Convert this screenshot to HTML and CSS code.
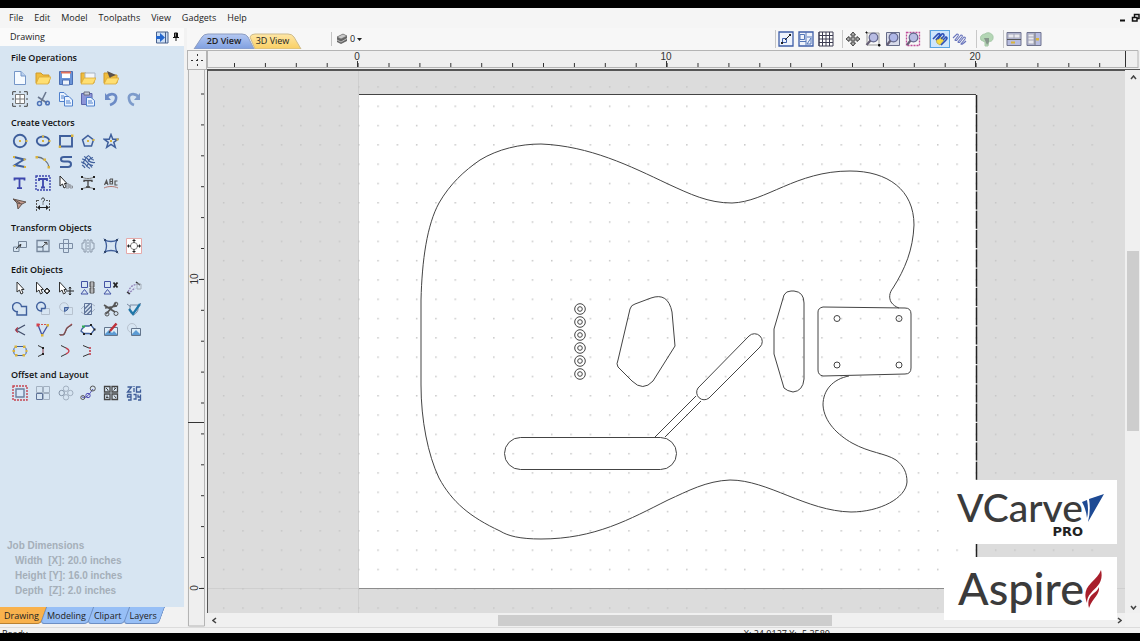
FILE: index.html
```html
<!DOCTYPE html>
<html lang="en">
<head>
  <meta charset="UTF-8">
  <title>VCarve Pro</title>
  <link rel="stylesheet" href="styles.css">
</head>
<body>
  <!-- menu bar -->
  <header class="menubar">
    <nav class="menu">
      <button>File</button>
      <button>Edit</button>
      <button>Model</button>
      <button>Toolpaths</button>
      <button>View</button>
      <button>Gadgets</button>
      <button>Help</button>
    </nav>
    <div class="window-buttons">
      <button aria-label="Minimize"><svg width="8" height="10" viewBox="0 0 8 10"><path d="M1 7.500H6" stroke="#111" stroke-width="2"/></svg></button>
      <button aria-label="Restore"><svg width="9" height="10" viewBox="0 0 9 10"><path d="M3.500 4V1.500H8V5.500H6M1.500 4.500H6V8H1.500Z" fill="none" stroke="#111" stroke-width="1.500"/></svg></button>
    </div>
  </header>

  <main class="main">
    <!-- left panel -->
    <aside class="sidebar">
      <div class="panel-header">
        <span>Drawing</span>
        <button aria-label="Switch panel"><svg width="13" height="13" viewBox="0 0 13 13"><path d="M.5 1H12V12H.5Z" fill="#cfe0f5" stroke="#47608c"/><path d="M9.500 1V12" stroke="#47608c"/><path d="M0 5H4V2L9 6.500L4 11V8H0Z" fill="#2467cf"/></svg></button>
        <button aria-label="Pin panel"><svg width="8" height="10" viewBox="0 0 8 10"><path d="M2.500 1H5.500V5H2.500ZM1 5.500H7M4 6V9" fill="none" stroke="#111"/><path d="M4.500 1V5" stroke="#111" stroke-width="2"/></svg></button>
      </div>

      <div class="panel">
        <section class="tools">
          <h2>File Operations</h2>
          <div class="tool-grid">
            <button aria-label="New"><svg class="icon" viewBox="0 0 16 16"><path d="M2.500 1.500H9L13.500 6V14.500H2.500Z" fill="#f5faff" stroke="#7496c8"/><path d="M9 1.500V6H13.500" fill="#b9d0ee" stroke="#7496c8"/></svg></button>
            <button aria-label="Open"><svg class="icon" viewBox="0 0 16 16"><path d="M1 13V3H6L8 5H14V13Z" fill="#f0bd3d" stroke="#cf9a2a"/><path d="M1 14L4 7H16L13 14Z" fill="#ffdf72" stroke="#d9a93a" stroke-width=".8"/></svg></button>
            <button aria-label="Save"><svg class="icon" viewBox="0 0 16 16"><path d="M1.500 1.500H14.500V14.500H1.500Z" fill="#6b94d8" stroke="#4a6fb4"/><path d="M4 2H12V8H4Z" fill="#fff" stroke="none"/><path d="M3 2.500H13" stroke="#e2725b" stroke-width="2"/><path d="M4.500 10H11.500V15H4.500Z" fill="#eef3fa" stroke="#4a6fb4"/></svg></button>
            <button aria-label="Import vectors"><svg class="icon" viewBox="0 0 16 16"><path d="M1 13V3H6L8 5H14V13Z" fill="#f0bd3d" stroke="#cf9a2a"/><path d="M5 3H15V9H5Z" fill="#f3f6fa" stroke="#a8b4c2"/><path d="M1 14L4 8H16L13 14Z" fill="#ffdf72" stroke="#d9a93a" stroke-width=".8"/></svg></button>
            <button aria-label="Import bitmap"><svg class="icon" viewBox="0 0 16 16"><path d="M1 13V3H6L8 5H14V13Z" fill="#f0bd3d" stroke="#cf9a2a"/><path d="M4 1L13 5L8 7L7 9Z" fill="#5c524b" stroke="none"/><path d="M1 14L4 8H16L13 14Z" fill="#ffdf72" stroke="#d9a93a" stroke-width=".8"/></svg></button>
          </div>
          <div class="tool-grid">
            <button aria-label="Job setup"><svg class="icon" viewBox="0 0 16 16"><path d="M3.500 3.500H12.500V12.500H3.500ZM8 3.500V12.500M3.500 8H12.500" fill="#fff" stroke="#777"/><path d="M.7 4V.7H4M12 .7H15.300V4M15.300 12V15.300H12M4 15.300H.7V12M0 8H2M14 8H16M8 0V2M8 14V16" stroke="#444"/></svg></button>
            <button aria-label="Cut"><svg class="icon" viewBox="0 0 16 16"><path d="M11 1L6 11M3 6L12 12" stroke="#6a7890" stroke-width="1.600"/><circle cx="4.500" cy="12.500" r="2" stroke="#4e73b8" stroke-width="1.500"/><circle cx="12.500" cy="12" r="1.800" stroke="#4e73b8" stroke-width="1.500"/></svg></button>
            <button aria-label="Copy"><svg class="icon" viewBox="0 0 16 16"><path d="M1.500 1.500H6L9 4.500V10.500H1.500Z" fill="#eaf3ff" stroke="#4f80cc"/><path d="M6.500 5.500H11L14.500 9V15H6.500Z" fill="#eaf3ff" stroke="#4f80cc"/><path d="M3 5H6M3 7H6M8 10H12M8 12H13" stroke="#4f80cc"/></svg></button>
            <button aria-label="Paste"><svg class="icon" viewBox="0 0 16 16"><path d="M1.500 2.500H12V13.500H1.500Z" fill="#8d95d8" stroke="#5b64aa"/><path d="M4 1H9.500V4H4Z" fill="#c8ccd8" stroke="#6b6f80"/><path d="M6.500 6.500H11L14.500 9.500V15H6.500Z" fill="#eaf3ff" stroke="#4f80cc"/><path d="M8 10H12M8 12H13" stroke="#4f80cc"/></svg></button>
            <button aria-label="Undo"><svg class="icon" viewBox="0 0 16 16"><path d="M3 6C8 1 14 3 13 8C12.500 11 10 13 7 14" stroke="#6c8bc6" stroke-width="2.600"/><path d="M2 2V9H8Z" fill="#6c8bc6" stroke="none"/></svg></button>
            <button aria-label="Redo"><svg class="icon" viewBox="0 0 16 16"><path d="M13 6C8 1 2 3 3 8C3.500 11 5 13 8 14" stroke="#7d9bcb" stroke-width="2.600"/><path d="M14 2V9H8Z" fill="#7d9bcb" stroke="none"/></svg></button>
          </div>
        </section>

        <section class="tools">
          <h2>Create Vectors</h2>
          <div class="tool-grid">
            <button aria-label="Circle"><svg class="icon" viewBox="0 0 16 16"><circle cx="8" cy="8" r="6.200" stroke-width="1.900"/><path d="M7 7H9V9H7ZM13.500 7H15.500V9H13.500Z" class="node"/></svg></button>
            <button aria-label="Ellipse"><svg class="icon" viewBox="0 0 16 16"><ellipse cx="8" cy="8" rx="6.200" ry="4.500" stroke-width="1.900"/><path d="M7 7H9V9H7ZM13.500 7H15.500V9H13.500ZM7 2.500H9V4.500H7Z" class="node"/></svg></button>
            <button aria-label="Rectangle"><svg class="icon" viewBox="0 0 16 16"><path d="M2 3H14V13.500H2Z" stroke-width="1.900"/><path d="M13 1.500H15.500V4H13ZM.7 12.500H3V15H.7Z" class="node"/></svg></button>
            <button aria-label="Polygon"><svg class="icon" viewBox="0 0 16 16"><path d="M8 2.500L13.500 6.800L11.500 13H4.500L2.500 6.800Z" stroke-width="1.500"/><path d="M7 7H9V9H7ZM12.500 6H14.500V8H12.500Z" class="node"/></svg></button>
            <button aria-label="Star"><svg class="icon" viewBox="0 0 16 16"><path d="M8 1.500L9.800 6.200H14.800L10.800 9.300L12.300 14.300L8 11.300L3.700 14.300L5.200 9.300L1.200 6.200H6.200Z" stroke-width="1.500"/><path d="M7 7H9V9H7ZM13.500 5.500H15.500V7.500H13.500Z" class="node"/></svg></button>
          </div>
          <div class="tool-grid">
            <button aria-label="Polyline"><svg class="icon" viewBox="0 0 16 16"><path d="M2 3L12 5.500L3 11L13 13" stroke-width="2"/><path d="M1 2H3V4H1ZM11.500 4.500H13.500V6.500H11.500ZM1.500 11H3.500V13H1.500ZM12 12H14V14H12Z" class="node"/></svg></button>
            <button aria-label="Arc"><svg class="icon" viewBox="0 0 16 16"><path d="M2 3C8 3 13 8 14 13" stroke="#68727c" stroke-width="1.300"/><path d="M.5 2H3V4.500H.5ZM8.500 4.500H11V7H8.500ZM12.500 12H15V14.500H12.500Z" class="node"/></svg></button>
            <button aria-label="Curve"><svg class="icon" viewBox="0 0 16 16"><path d="M14 3H6C2 3 2 7.500 6 7.500H10C14 7.500 14 13 10 13H2" stroke-width="2"/></svg></button>
            <button aria-label="Texture"><svg class="icon" viewBox="0 0 16 16"><path d="M2 5Q5 5 7 8Q9 11 13 11.500M4 2.500Q8 4 9 7Q11 9 15 8.500M8 1.500Q10 2 11 4.500Q12 6 14 6M1 8Q4 8 6 11Q7 13 10 14.500M2 11Q4 12 5 14M5 6Q6 3 8 2M8 7.500Q10 4 13 3.500M3 10Q4 6 5 6M7 13Q7 10 9 10Q11 12 12 13.500" stroke-width="1.200"/></svg></button>
          </div>
          <div class="tool-grid">
            <button aria-label="Text"><svg class="icon" viewBox="0 0 16 16"><path d="M2.500 5.500V3.500H12.500V5.500M7.500 3.500V13M5 13.200H10" stroke="#3c46ad" stroke-width="1.800"/></svg></button>
            <button aria-label="Auto layout text"><svg class="icon" viewBox="0 0 16 16"><path d="M1 1H15V15H1Z" stroke="#3c46ad" stroke-width="1.400" stroke-dasharray="2 1"/><path d="M4 6V4H12V6M8 4V12.500M6 12.500H10" stroke="#3c46ad" stroke-width="1.800"/></svg></button>
            <button aria-label="Edit text"><svg class="icon" viewBox="0 0 16 16"><path d="M2 1V11L4.500 9L6 13L8 12L6.500 8.500H9Z" fill="#fff" stroke="#222"/><path d="M8 9H11V13H8ZM12 9V13H14.500V11H12M8 11H11" stroke="#8c9097"/></svg></button>
            <button aria-label="Transform text"><svg class="icon" viewBox="0 0 16 16"><path d="M2 2C5 4 11 4 14 2M2 14C5 12 11 12 14 14" stroke="#777"/><path d="M4 7V5.500H12V7M8 5.500V12M6 12H10" stroke="#444" stroke-width="1.300"/><path d="M1 1H3V3H1ZM13 1H15V3H13ZM1 13H3V15H1ZM13 13H15V15H13Z" fill="#222" stroke="none"/></svg></button>
            <button aria-label="Text on curve"><svg class="icon" viewBox="0 0 16 16"><path d="M1.500 10L3.500 5.500L5 10M2.500 8.500H4.500M7 4V9H9.500V4H7M7 6.500H9.500M14.500 6H12V10H14.500" stroke="#555" stroke-width="1.200"/><path d="M1 13C5 11 11 11 15 13" stroke="#b5776f"/></svg></button>
          </div>
          <div class="tool-grid">
            <button aria-label="Trace bitmap"><svg class="icon" viewBox="0 0 16 16"><path d="M1 3L14 6L10 8L6 13L5 7Z" fill="#c59a8e" stroke="#63554f"/><path d="M5 7L10 8M1 3L8 7" stroke="#63554f"/></svg></button>
            <button aria-label="Dimension"><svg class="icon" viewBox="0 0 16 16"><path d="M1.500 4V15M14.500 4V15M2 4.500H5M11 4.500H14" stroke="#555" stroke-dasharray="2 1"/><path d="M3 11.500H13" stroke="#222"/><path d="M2 11.500L5 9V14ZM14 11.500L11 9V14Z" fill="#222" stroke="none"/><path d="M6.500 3.500C6.500 1.500 9.500 1.500 9.500 3.500C9.500 5 8 5 8 6.500M8 7.500V8.500" stroke="#222"/></svg></button>
          </div>
        </section>

        <section class="tools">
          <h2>Transform Objects</h2>
          <div class="tool-grid">
            <button aria-label="Move"><svg class="icon" viewBox="0 0 16 16"><path d="M6.500 3.500H14.500V9.500H6.500ZM1.500 9H7V13.500H1.500Z" stroke="#75869a"/><path d="M4 11L9 6.500M9 6.500L6.500 7.500M9 6.500L8 9" stroke="#333"/></svg></button>
            <button aria-label="Set size"><svg class="icon" viewBox="0 0 16 16"><path d="M2 2.500H14V13.500H2ZM2 9H8V13.500" stroke="#75869a" stroke-width="1.300"/><path d="M7 9L12 4.500M12 4.500H9M12 4.500V7" stroke="#444"/></svg></button>
            <button aria-label="Rotate"><svg class="icon" viewBox="0 0 16 16"><path d="M5.500 1.500H10.500V14.500H5.500ZM1.500 5.500H14.500V10.500H1.500Z" stroke="#7b8ca4"/></svg></button>
            <button aria-label="Mirror"><svg class="icon" viewBox="0 0 16 16"><path d="M6 2H4V5H2V11H4V14H6ZM10 2H12V5H14V11H12V14H10Z" stroke="#8c99aa"/><path d="M8 1V15" stroke="#8c99aa" stroke-dasharray="2 1"/></svg></button>
            <button aria-label="Distort"><svg class="icon" viewBox="0 0 16 16"><path d="M2 2C5 4 11 4 14 2C12 6 12 10 14 14C11 12 5 12 2 14C4 10 4 6 2 2Z" stroke-width="1.300"/><path d="M1 1H3V3H1ZM13 1H15V3H13ZM1 13H3V15H1ZM13 13H15V15H13Z" fill="#34496e" stroke="none"/></svg></button>
            <button aria-label="Align"><svg class="icon" viewBox="0 0 16 16"><path d="M.5 .5H15.500V15.500H.5Z" fill="#fff" stroke="#e5a9a9"/><circle cx="8" cy="8" r="3.500" stroke="#888"/><path d="M8 1L6 3H10ZM8 15L6 13H10ZM1 8L3 6V10ZM15 8L13 6V10Z" fill="#222" stroke="none"/><path d="M8 2V5M8 11V14M2 8H5M11 8H14" stroke="#222"/></svg></button>
          </div>
        </section>

        <section class="tools">
          <h2>Edit Objects</h2>
          <div class="tool-grid">
            <button aria-label="Select"><svg class="icon" viewBox="0 0 16 16"><path d="M5 2V12L7.500 10L9 14L11 13L9.500 9.500H12Z" fill="#fff" stroke="#333"/></svg></button>
            <button aria-label="Node edit"><svg class="icon" viewBox="0 0 16 16"><path d="M1.500 2V12L4 10L5.500 14L7.500 13L6 9.500H8.500Z" fill="#fff" stroke="#333"/><path d="M12 8L15 11L12 14L9 11Z" fill="#555" stroke="#222"/><circle cx="12" cy="11" r="1.300" fill="#fff" stroke="none"/></svg></button>
            <button aria-label="Interactive move"><svg class="icon" viewBox="0 0 16 16"><path d="M1.500 2V12L4 10L5.500 14L7.500 13L6 9.500H8.500Z" fill="#fff" stroke="#333"/><path d="M12 7V15M8 11H16M11 8.500L12 7L13 8.500M11 13.500L12 15L13 13.500" stroke="#222"/></svg></button>
            <button aria-label="Group"><svg class="icon" viewBox="0 0 16 16"><path d="M1.500 1.500H7.500V7.500H1.500ZM1 14L4.500 9.500L8 14Z" stroke="#4353a4"/><path d="M10 2H14V7H10ZM10 8H14V13H10Z" fill="#8b8d92" stroke="#555"/><path d="M12 2V13" stroke="#ddd"/></svg></button>
            <button aria-label="Ungroup"><svg class="icon" viewBox="0 0 16 16"><path d="M1.500 1.500H7.500V7.500H1.500ZM1 14L4.500 9.500L8 14Z" stroke="#4353a4"/><path d="M10.500 2.500L14.500 7.500M14.500 2.500L10.500 7.500" stroke="#222" stroke-width="1.800"/></svg></button>
            <button aria-label="Measure"><svg class="icon" viewBox="0 0 16 16"><path d="M2 12C5 5 8 5 12 4M2 14L9 8" stroke="#9181b8" stroke-width="1.300" stroke-dasharray="2 1"/><path d="M1 12L4 14M10 2L14 5" stroke="#333" stroke-width="1.500"/><path d="M11 4H15V9H11Z" stroke="#a7b0ba"/></svg></button>
          </div>
          <div class="tool-grid">
            <button aria-label="Weld"><svg class="icon" viewBox="0 0 16 16"><path d="M6 10.500A4.500 4.500 0 1 1 9.500 5.500H14.500V14H5V10.500" stroke-width="1.400"/></svg></button>
            <button aria-label="Subtract"><svg class="icon" viewBox="0 0 16 16"><path d="M10 7.500H14.500V13.500H6.500V10" stroke="#b3bfcd"/><path d="M6.500 10A4.400 4.400 0 1 1 10 7.500H6.500Z" stroke-width="1.400"/></svg></button>
            <button aria-label="Intersect"><svg class="icon" viewBox="0 0 16 16"><circle cx="6" cy="6" r="4.300" stroke="#b7c2cf"/><path d="M6.500 6.500H14.500V13.500H6.500Z" stroke="#b7c2cf"/><path d="M6.500 6.500H10.500Q10 9.500 6.500 10.500Z" fill="#8ea6cc"/></svg></button>
            <button aria-label="Hatch"><svg class="icon" viewBox="0 0 16 16"><path d="M4.500 2.500H11.500V13.500H4.500Z" stroke="#5f7398"/><path d="M4.500 8L10 2.500M4.500 12L11.500 5M7 13.500L11.500 9" stroke="#5f7398" stroke-width="1.400"/><path d="M1 8L4 5M12 11L15 8M1 11L4 13M12 3L15 5" stroke="#aab6c8"/></svg></button>
            <button aria-label="Trim"><svg class="icon" viewBox="0 0 16 16"><path d="M1 4L12 11M3 13L13 2M2 7L14 5" stroke="#555" stroke-width="1.700"/><circle cx="13" cy="12.500" r="2" stroke="#555"/><circle cx="4" cy="13" r="2" stroke="#555"/><circle cx="13" cy="3" r="1.800" stroke="#555"/></svg></button>
            <button aria-label="Validate"><svg class="icon" viewBox="0 0 16 16"><path d="M4 4H12V9C11 12 8 14 7 14C5 13 4 11 4 9ZM1 3L5 6M15 2L11 6" stroke="#7b8ca4"/><path d="M3 8L7 13L14 3" stroke="#1e76a8" stroke-width="2.200"/></svg></button>
          </div>
          <div class="tool-grid">
            <button aria-label="Fillet"><svg class="icon" viewBox="0 0 16 16"><path d="M13 3L4 8L13 13" stroke="#44506c" stroke-width="1.300"/><path d="M6 5.500Q2 8 6 10.500" stroke="#b03546" stroke-width="1.300"/></svg></button>
            <button aria-label="Extend"><svg class="icon" viewBox="0 0 16 16"><path d="M3 3L7 13L13 3" stroke="#4353a4" stroke-width="1.300"/><path d="M3 2.500H11" stroke="#d4534f" stroke-dasharray="2 1"/><path d="M1.500 1.500H4.500V4.500H1.500Z" fill="#d4404b" stroke="none"/><path d="M6 12H8.500V14.500H6ZM11.500 2H14V4.500H11.500Z" class="node"/></svg></button>
            <button aria-label="Fit curves"><svg class="icon" viewBox="0 0 16 16"><path d="M2 13C8 14 7 8 9 6S12 4 14 2" stroke="#a4484e" stroke-width="1.500"/><path d="M1 12.500L6 13L9 6L14 3" stroke="#555" stroke-width=".8"/></svg></button>
            <button aria-label="Join"><svg class="icon" viewBox="0 0 16 16"><path d="M2 7L5 4H9L11 3L14.500 7.500L11 12L9 11.500H4L1 9Z" fill="#f2f7fc" stroke-width="1.300"/><path d="M2 4.500H5" stroke="#2fae52" stroke-width="2"/><path d="M10 2H12V4H10ZM13.500 6.500H15.500V8.500H13.500ZM10 11H12V13H10ZM3 11H5V13H3Z" fill="#222" stroke="none"/></svg></button>
            <button aria-label="Edit picture"><svg class="icon" viewBox="0 0 16 16"><path d="M1.500 5.500H14.500V13.500H1.500Z" fill="#dcecf7" stroke="#63758c"/><path d="M2 12L6 8L9 11L11 9L14 12V13H2Z" fill="#5c9bd4" stroke="none"/><path d="M13.500 1.500L7 9" stroke="#bd313a" stroke-width="2.500"/><path d="M7 9L6 11" stroke="#333"/></svg></button>
            <button aria-label="Crop picture"><svg class="icon" viewBox="0 0 16 16"><circle cx="6" cy="6" r="4.500" stroke="#b7c2cf"/><path d="M5.500 6.500H14.500V13.500H5.500Z" fill="#dcecf7" stroke="#63758c"/><path d="M6 12L10 8L14 12V13H6Z" fill="#5c9bd4" stroke="none"/></svg></button>
          </div>
          <div class="tool-grid">
            <button aria-label="Vector boundary"><svg class="icon" viewBox="0 0 16 16"><path d="M4 3.500H12Q14.500 5 14.500 8T12 12.500H4Q1.500 11 1.500 8T4 3.500Z"/><path d="M2.500 2.500H5V5H2.500ZM11 2.500H13.500V5H11ZM.5 7H3V9H.5ZM13.500 7H15.500V9H13.500ZM3 11H5.500V13.500H3ZM10.500 11H13V13.500H10.500Z" class="node"/></svg></button>
            <button aria-label="Extend to corner"><svg class="icon" viewBox="0 0 16 16"><path d="M3 2.500L8 5M3 13.500L8 11" stroke="#333"/><path d="M8 5V11" stroke="#8a3a48"/><path d="M7 4H9V6H7ZM7 10H9V12H7Z" fill="#222" stroke="none"/></svg></button>
            <button aria-label="Join with curve"><svg class="icon" viewBox="0 0 16 16"><path d="M3 2.500L8 5M3 13.500L8 11" stroke="#333"/><path d="M8 5Q14 8 8 11" stroke="#c43d4d" stroke-width="1.400"/></svg></button>
            <button aria-label="Join with line"><svg class="icon" viewBox="0 0 16 16"><path d="M3 2.500L9 5M3 13.500L9 11" stroke="#333"/><path d="M10 4V12" stroke="#c43d4d" stroke-width="1.600" stroke-dasharray="2 1"/></svg></button>
          </div>
        </section>

        <section class="tools">
          <h2>Offset and Layout</h2>
          <div class="tool-grid">
            <button aria-label="Offset"><svg class="icon" viewBox="0 0 16 16"><path d="M1 1H15V15H1Z" stroke="#c64450" stroke-width="1.400" stroke-dasharray="2 1"/><path d="M4 4H12V12H4Z" fill="#d9e8f8" stroke="#6b7f9f" stroke-width="1.400"/></svg></button>
            <button aria-label="Array copy"><svg class="icon" viewBox="0 0 16 16"><path d="M1.500 1.500H7.500V7.500H1.500ZM8.500 1.500H14.500V7.500H8.500ZM8.500 8.500H14.500V14.500H8.500Z" stroke="#a2b0c0"/><path d="M1.500 8.500H7.500V14.500H1.500Z" stroke="#5f7398"/></svg></button>
            <button aria-label="Circular copy"><svg class="icon" viewBox="0 0 16 16"><circle cx="8" cy="3.700" r="2.700" stroke="#a2b0c0"/><circle cx="12.300" cy="8" r="2.700" stroke="#a2b0c0"/><circle cx="8" cy="12.300" r="2.700" stroke="#a2b0c0"/><circle cx="3.700" cy="8" r="2.700" stroke="#8595a8"/></svg></button>
            <button aria-label="Copy along vectors"><svg class="icon" viewBox="0 0 16 16"><path d="M2 12C7 14 10 8 13 4" stroke="#4d4ab4"/><circle cx="2.800" cy="12.500" r="2" stroke="#555"/><circle cx="8" cy="10.500" r="2.200" stroke="#4d4ab4"/><circle cx="12.800" cy="3.500" r="2.500" stroke="#555"/></svg></button>
            <button aria-label="Nesting"><svg class="icon" viewBox="0 0 16 16"><path d="M1.500 1.500H7V7H1.500ZM9 1.500H14.500V7H9ZM1.500 9H7V14.500H1.500ZM9 9H14.500V14.500H9Z" stroke="#444" stroke-width="1.300"/><path d="M3 3L5.500 5.500M10.500 5.500L13 3M3 12.500H5.500M4 10.500V13M11 10.500L13 13M4 5H5M11 3H12" stroke="#444"/></svg></button>
            <button aria-label="Plate production"><svg class="icon" viewBox="0 0 16 16"><path d="M1.500 2H5.500L1.500 7H5.500M8 3V7M8 1V2M14.500 2H10.500V7H14.500V4.500M1.500 9.500H5V12H1.500V9.500M5 12V15H2M7.500 9.500H10V14H7.500M12 9.500V12H14.500M14.500 9.500V15H12" stroke="#3e5c98" stroke-width="1.300"/></svg></button>
          </div>
        </section>

        <div class="job-info">
          <p>Job Dimensions</p>
          <p class="dim">Width  [X]: 20.0 inches</p>
          <p class="dim">Height [Y]: 16.0 inches</p>
          <p class="dim">Depth  [Z]: 2.0 inches</p>
        </div>
      </div>

      <div class="panel-tabs">
        <button class="active">Drawing</button>
        <button>Modeling</button>
        <button>Clipart</button>
        <button>Layers</button>
      </div>
    </aside>

    <!-- drawing area -->
    <div class="workspace">
      <div class="toolbar">
        <div class="view-tabs">
          <button class="view-tab active">
            <svg width="64" height="16" viewBox="0 0 64 16"><defs><linearGradient id="blue" x2="0" y2="1"><stop offset="0" stop-color="#b4c8f2"/><stop offset="1" stop-color="#7f9fe0"/></linearGradient></defs><path d="M1 16L9 4Q11 1 15 1H49Q53 1 55 4L61 16Z" fill="url(#blue)" stroke="#8c9cc0"/></svg>
            <span>2D View</span>
          </button>
          <button class="view-tab">
            <svg width="58" height="16" viewBox="0 0 58 16"><defs><linearGradient id="gold" x2="0" y2="1"><stop offset="0" stop-color="#ffe7a6"/><stop offset="1" stop-color="#f9cf63"/></linearGradient></defs><path d="M6 16L1 4Q2 1 6 1H39Q43 1 45 4L52 16Z" fill="url(#gold)" stroke="#cdbb8c"/></svg>
            <span>3D View</span>
          </button>
        </div>
        <button class="layer-button"><svg width="12" height="12" viewBox="0 0 12 12"><path d="M1 4L7 1L11 3V8L5 11L1 9Z" fill="#666"/><path d="M1 4L7 1L11 3L5 6Z" fill="#c9c9c9" stroke="#666" stroke-width=".6"/><path d="M1 7L5 9L11 5.500" stroke="#bbb" fill="none"/></svg>0<svg width="5" height="3" viewBox="0 0 5 3"><path d="M0 0H5L2.500 3Z" fill="#222"/></svg></button>

        <div class="tool-groups">
          <div class="group">
            <button aria-label="Snap to geometry"><svg class="icon" viewBox="0 0 16 16"><path d="M1 1H15V15H1Z" fill="#eef3fc" stroke="#3f5fa8" stroke-width="1.300"/><path d="M4.500 7.500H8.500V11.500H4.500Z" stroke="#3f5fa8"/><path d="M7 9L13 3" stroke="#222"/><path d="M3 11H5V13H3ZM11 3H13V5H11Z" fill="#222" stroke="none"/></svg></button>
            <button aria-label="Snap to guides"><svg class="icon" viewBox="0 0 16 16"><path d="M1 1H15V15H1Z" fill="#eef3fc" stroke="#3f5fa8" stroke-width="1.300"/><path d="M2 3.500H6.500V8.500H2ZM8 1V15M2 10.500H8M9 6H14M9 13L13 7V13Z" stroke="#5577b8"/></svg></button>
            <button aria-label="Snap to grid"><svg class="icon" viewBox="0 0 16 16"><path d="M1 1H15V15H1ZM4.500 1V15M8 1V15M11.500 1V15M1 4.500H15M1 8H15M1 11.500H15M1 1V15" fill="#fff" stroke="#3d3d52"/></svg></button>
          </div>
          <div class="group">
            <button aria-label="Pan"><svg class="icon" viewBox="0 0 16 16"><path d="M8 1L10.500 4H9V7H12V5.500L15 8L12 10.500V9H9V12H10.500L8 15L5.500 12H7V9H4V10.500L1 8L4 5.500V7H7V4H5.500Z" fill="#aaa" stroke="#444"/></svg></button>
            <button aria-label="Zoom window"><svg class="icon" viewBox="0 0 16 16"><path d="M2 2H14V14H2Z" stroke="#999"/><circle cx="8.500" cy="6.500" r="4.300" fill="#b8bce3" stroke="#64688e" stroke-width="1.300"/><path d="M5.500 9.500L1.500 14" stroke="#665f75" stroke-width="2.200"/><path d="M1 1H2V2H1ZM13.500 13.500H15V15H13.500Z" fill="#111" stroke="#111"/></svg></button>
            <button aria-label="Zoom extents"><svg class="icon" viewBox="0 0 16 16"><path d="M1.500 1.500H14.500V14.500H1.500Z" fill="#d8dbea" stroke="#666c88"/><circle cx="8.500" cy="6.500" r="4.300" fill="#aeb6e6" stroke="#64688e" stroke-width="1.300"/><path d="M5.500 9.500L2 14" stroke="#665f75" stroke-width="2.200"/></svg></button>
            <button aria-label="Zoom selected"><svg class="icon" viewBox="0 0 16 16"><path d="M1.500 1.500H14.500V14.500H1.500Z" stroke="#c04c99" stroke-width="1.300" stroke-dasharray="2 1"/><circle cx="8.500" cy="6.500" r="4.300" fill="#b8bce3" stroke="#64688e" stroke-width="1.300"/><path d="M5.500 9.500L2 14" stroke="#665f75" stroke-width="2.200"/></svg></button>
          </div>
          <div class="group">
            <button class="on" aria-label="Solid preview"><svg class="icon" viewBox="0 0 16 16"><path d="M4 8L8 5L12 9L8 14L5 12Z" fill="#f5dc45" stroke="#c5b552"/><path d="M1 8L6 3Q8 2 8 4L4 9M6 8L10 3Q12 2 12 5L9 8M11 9L14 6Q16 7 14 9L9 14" stroke="#2d4fb5" stroke-width="1.600"/></svg></button>
            <button aria-label="Toolpath preview"><svg class="icon" viewBox="0 0 16 16"><path d="M1 7L5 3Q7 3 6 5L3 9Q4 10 5 9L9 4Q11 4 10 6L6 11Q7 12 8 11L12 6Q14 6 13 8L9 13Q10 14 14 10" stroke="#6874bc" stroke-width="1.100"/></svg></button>
          </div>
          <div class="group">
            <button aria-label="Model preview"><svg class="icon" viewBox="0 0 16 16"><path d="M2 9C0 5 4 3 6 3C9 0 15 3 14 7C14 10 11 11 10 10L9 15H6V11Z" fill="#b4d6b5" stroke="#a5c8a7"/><path d="M5 7H10V11L8 14Z" fill="#87978c" stroke="none"/></svg></button>
          </div>
          <div class="group">
            <button aria-label="Tile horizontally"><svg class="icon" viewBox="0 0 16 16"><path d="M1 1.500H15V14.500H1Z" fill="#b8bde0" stroke="#6f738e"/><path d="M2 3H14V7H2ZM8 3V7" fill="#e9e9ef" stroke="#a4a6b8"/><path d="M1 8.500H15" stroke="#555"/><path d="M5 10.500H9V12.500H5Z" class="node"/></svg></button>
            <button aria-label="Tile vertically"><svg class="icon" viewBox="0 0 16 16"><path d="M1 1.500H15V14.500H1Z" fill="#b8bde0" stroke="#6f738e"/><path d="M2 3H8V13H2ZM2 6H8M2 9H8" fill="#e9e9ef" stroke="#a4a6b8"/><path d="M9 2V14" stroke="#777"/><path d="M10 7H13V9.500H10Z" class="node"/></svg></button>
          </div>
        </div>
      </div>

      <button class="ruler-corner" aria-label="Set origin"><svg width="17" height="19" viewBox="0 0 17 19"><path d="M8.500 3V6M8.500 13V16M2 9.500H5M12 9.500H15M7 9.500H10M8.500 8V11" stroke="#333" stroke-dasharray="2 1"/></svg></button>

      <!-- top ruler, 10 units = 309px -->
      <svg class="ruler-top" width="100%" height="20">
        <defs>
          <pattern id="ticksX" x="27" width="30.900" height="20" patternUnits="userSpaceOnUse"><path d="M.5 13V17" stroke="#333"/></pattern>
        </defs>
        <rect x="20" width="880" height="20" fill="url(#ticksX)"/>
        <path d="M.5 0V18M0 17.500H931M0 .5H931V18" stroke="#b4b4b4" fill="none"/>
        <path d="M150.500 11V17M459.500 11V17M768.500 11V17M918.500 1V17" stroke="#333"/>
        <text x="150" y="10">0</text>
        <text x="459" y="10">10</text>
        <text x="768" y="10">20</text>
      </svg>

      <svg class="ruler-left" width="20" height="100%">
        <defs>
          <pattern id="ticksY" y="23.500" width="20" height="30.900" patternUnits="userSpaceOnUse"><path d="M14 .5H17" stroke="#333"/></pattern>
        </defs>
        <rect y="5" width="20" height="530" fill="url(#ticksY)"/>
        <path d="M1.500 0V556H17.500V0" stroke="#b4b4b4" fill="none"/>
        <path d="M12 209.500H17M12 518.500H17M1 352.500H17" stroke="#333"/>
        <text transform="translate(11 209) rotate(-90)">10</text>
        <text transform="translate(11 518) rotate(-90)">0</text>
      </svg>

      <!-- canvas, origin of the group is the window corner -->
      <svg class="canvas" width="100%" height="100%">
        <defs>
          <pattern id="dots" x="358" y="588" width="19.300" height="19.300" patternUnits="userSpaceOnUse">
            <rect width="1.500" height="1.500" fill="#c6c6c6"/>
          </pattern>
        </defs>
        <g transform="translate(-208 -71)" fill="none" stroke="#444">
          <path d="M207 588.500H1125M358.500 70V613" stroke="#cfcfcf"/>
          <rect x="359" y="95" width="617" height="493" fill="#fff" stroke="none"/>
          <rect x="215" y="80" width="880" height="533" fill="url(#dots)" stroke="none"/>
          <path d="M359 94.500H976" stroke="#444"/>
          <path d="M359 588.500H976" stroke="#8c8c8c"/>
          <path d="M976.500 95V588" stroke="#222" stroke-width="1.500" stroke-dasharray="18 1.300"/>

          <!-- body outline -->
          <path d="M899 308C896 307 893 305 891 302C889 298 889 293 893 288C905 269 913 250 914 225C914 190 888 171 850 171C796 171 766 202 732 203C708 203 690 194 668 184C630 166 590 146 541 144C520 144 498 149 480 160C464 171 450 184 439 203C427 225 422 260 421 300V385C421 420 428 455 439 478C452 502 470 517 500 531C508 536 520 539 541 539C595 539 630 519 668 500C688 491 706 481 730 480C768 480 806 511 851 512C880 512 906 498 907 482C907 473 904 466 896 460C885 453 870 453 852 443C838 435 824 422 823 405C823 390 833 379 849 376"/>

          <!-- neck pocket and screw holes -->
          <path d="M823 307L905 308Q911 308 911 314V368Q911 374 905 374L823 376Q818 375 818 370V312Q818 308 823 307Z"/>
          <circle cx="837" cy="318.500" r="3"/>
          <circle cx="899" cy="318.500" r="3"/>
          <circle cx="837" cy="365" r="3"/>
          <circle cx="899" cy="365" r="3"/>

          <!-- pickups and control cavity -->
          <path d="M784 295Q786 291 791 291H794Q804 292 804 303V379Q803 391 793 392Q787 391 784 388L774 354V329Z"/>
          <path d="M635 304L651 298Q668 292 672 312L675 346L653 381Q643 392 632 381L618 367Q616 364 618 360L630 309Q631 305 635 304Z"/>
          <rect x="504.500" y="437.500" width="172" height="32" rx="16"/>
          <path d="M749 336L698 388A7.500 7.500 0 0 0 709 398L760 347A7.500 7.500 0 0 0 749 336Z"/>
          <path d="M696 396L655 437M701 401L665 437"/>

          <!-- string holes -->
          <g>
            <circle cx="580" cy="309" r="5.300"/><circle cx="580" cy="309" r="2.300"/>
            <circle cx="580" cy="322" r="5.300"/><circle cx="580" cy="322" r="2.300"/>
            <circle cx="580" cy="335" r="5.300"/><circle cx="580" cy="335" r="2.300"/>
            <circle cx="580" cy="348" r="5.300"/><circle cx="580" cy="348" r="2.300"/>
            <circle cx="580" cy="361" r="5.300"/><circle cx="580" cy="361" r="2.300"/>
            <circle cx="580" cy="374" r="5.300"/><circle cx="580" cy="374" r="2.300"/>
          </g>
        </g>
      </svg>

      <div class="scroll-v">
        <button aria-label="Scroll up"><svg width="7" height="5" viewBox="0 0 7 5"><path d="M1 4L3.500 1L6 4"/></svg></button>
        <div class="track"><div class="thumb"></div></div>
        <button aria-label="Scroll down"><svg width="7" height="5" viewBox="0 0 7 5"><path d="M1 1L3.500 4L6 1"/></svg></button>
      </div>
      <div class="scroll-h">
        <button aria-label="Scroll left"><svg width="5" height="7" viewBox="0 0 5 7"><path d="M4 1L1 3.500L4 6"/></svg></button>
        <div class="track"><div class="thumb"></div></div>
        <button aria-label="Scroll right"><svg width="5" height="7" viewBox="0 0 5 7"><path d="M1 1L4 3.500L1 6"/></svg></button>
      </div>
    </div>
  </main>

  <footer class="statusbar">
    <span>Ready</span>
    <span class="coords">X: 24.0127 Y: -5.3580</span>
  </footer>

  <!-- product logos over the drawing -->
  <div class="logos">
    <div class="logo vcarve">
      <span class="name">VCarve</span>
      <span class="edition">PRO</span>
      <svg width="23" height="29" viewBox="0 0 23 29"><path d="M7 5L22 0L6 28Q9 16 7 5Z" fill="#1d4a94"/><path d="M0 8L5 6Q7 16 5 24Q4 15 0 8Z" fill="#1d4a94"/></svg>
    </div>
    <div class="logo aspire">
      <span class="name">Aspire</span>
      <svg width="18" height="40" viewBox="0 0 18 40"><path d="M16 1C19 14 11 18 6 24C3 27 2 30 2 34C-1 26 0 20 6 14C11 9 14 6 16 1Z" fill="#a81e2b"/><path d="M14 18C15 26 8 28 4 39C2 31 5 27 9 24C12 22 13 20 14 18Z" fill="#a81e2b"/></svg>
    </div>
  </div>
</body>
</html>
```
FILE: styles.css
```css
* {
  box-sizing: border-box;
}

body {
  margin: 0;
  height: 100vh;
  border-top: 8px solid #000;
  border-bottom: 8px solid #000;
  background-color: #f2f2f2;
  color: #222;
  font-family: "Open Sans", "Noto Sans", sans-serif;
  font-size: 9px;
  line-height: 12px;
  display: flex;
  flex-direction: column;
  overflow: hidden;
  position: relative;
}

button {
  border: none;
  background: none;
  padding: 0;
  margin: 0;
  color: inherit;
  font: inherit;
  cursor: pointer;
}

svg {
  display: block;
  flex: none;
}

.icon {
  width: 16px;
  height: 16px;
  fill: none;
  stroke: #3f5f9c;
}

.node {
  fill: #d9b33c;
  stroke: none;
}

/* menu bar */
.menubar {
  height: 20px;
  flex: none;
  display: flex;
  justify-content: space-between;
  align-items: center;
  padding-left: 9px;
  background-color: #f5f5f5;
}

.menu {
  display: flex;
  gap: 11px;
}

.window-buttons {
  display: flex;
  gap: 4px;
}

.main {
  flex: 1;
  min-height: 0;
  display: flex;
  gap: 3px;
}

/* left panel */
.sidebar {
  width: 184px;
  flex: none;
  display: flex;
  flex-direction: column;
}

.panel-header {
  height: 18px;
  flex: none;
  display: flex;
  align-items: center;
  gap: 3px;
  padding: 0 4px 0 10px;
  background-color: #fafafa;
}

.panel-header span {
  flex: 1;
}

.panel {
  flex: 1;
  min-height: 0;
  display: flex;
  flex-direction: column;
  gap: 6px;
  padding: 4px 0 9px;
  background-color: #d7e5f2;
}

.tools {
  padding-left: 9px;
}

.tools h2 {
  margin: 0;
  padding-left: 2px;
  font-size: 9px;
  font-weight: 600;
  line-height: 15px;
  color: #111;
}

.tools:first-child h2 {
  padding-bottom: 2px;
}

.tool-grid {
  width: 136px;
  display: grid;
  grid-template-columns: repeat(6, 1fr);
}

.tool-grid button {
  height: 21px;
  display: flex;
  align-items: center;
  justify-content: center;
}

.job-info {
  margin-top: auto;
  padding-left: 7px;
  font-family: "Liberation Sans", Arial, sans-serif;
  font-size: 10px;
  font-weight: bold;
  line-height: 15px;
  color: #a5afb9;
}

.job-info p {
  margin: 0;
  white-space: pre;
}

.job-info .dim {
  padding-left: 8px;
}

.panel-tabs {
  height: 20px;
  flex: none;
  display: flex;
  align-items: flex-start;
  overflow: hidden;
}

.panel-tabs button {
  position: relative;
  z-index: 0;
  height: 17px;
  padding: 0 4px;
}

.panel-tabs button::before {
  content: "";
  position: absolute;
  z-index: -1;
  inset: 0 -1px 0 0;
  background-color: #97bff6;
  border: 1px solid #6d8fc4;
  border-top: none;
  border-radius: 0 0 4px 4px;
  transform: skewX(-20deg);
}

.panel-tabs .active::before {
  left: -6px;
  background-color: #f9b24d;
  border-color: #b98233;
}

/* drawing area */
.workspace {
  flex: 1;
  min-width: 0;
  display: grid;
  grid-template-columns: 20px 1fr 15px;
  grid-template-rows: 22px 20px 1fr 14px;
}

.toolbar {
  grid-column: 1 / 4;
  display: flex;
  align-items: center;
  background-color: #f7f7f7;
}

.view-tabs {
  display: flex;
  align-self: flex-end;
  padding: 0 0 1px 6px;
}

.view-tab {
  position: relative;
  display: flex;
  align-items: center;
  justify-content: center;
  width: 57px;
  height: 16px;
}

.view-tab.active {
  width: 62px;
  margin-right: -6px;
  font-weight: 600;
  z-index: 1;
}

.view-tab svg {
  position: absolute;
  left: 0;
  top: 0;
}

.view-tab span {
  position: relative;
}

.view-tab:not(.active) span {
  padding-right: 10px;
}

.layer-button {
  height: 14px;
  margin-left: 25px;
  padding-left: 4px;
  border-left: 1px solid #c4c4c4;
  display: flex;
  align-items: center;
  gap: 2px;
}

.tool-groups {
  margin-left: auto;
  margin-right: 96px;
  display: flex;
  gap: 6px;
}

.group {
  display: flex;
  border-left: 1px solid #c8c8c8;
}

.group button {
  width: 20px;
  height: 18px;
  display: flex;
  align-items: center;
  justify-content: center;
}

.group .on {
  background-color: #cfe6fb;
  outline: 1px solid #5aa3e0;
  outline-offset: -1px;
}

/* rulers */
.ruler-corner {
  border: 1px solid #b4b4b4;
  display: flex;
  justify-content: center;
}

.ruler-top {
  grid-column: 2 / 4;
  border-bottom: 1px solid #555;
  background-color: #efefef;
}

.ruler-left {
  grid-row: 3 / 5;
  background-color: #efefef;
}

.ruler-top text,
.ruler-left text {
  font-family: "Liberation Sans", Arial, sans-serif;
  font-size: 10px;
  fill: #333;
  text-anchor: middle;
}

.canvas {
  min-height: 0;
  border-left: 1px solid #555;
  border-top: 1px solid #555;
  background-color: #dcdcdc;
}

/* scroll bars */
.scroll-v,
.scroll-h {
  display: flex;
  background-color: #f0f0f0;
}

.scroll-v {
  flex-direction: column;
  padding: 4px 1px 2px 2px;
}

.scroll-h {
  padding: 2px 2px 1px 4px;
}

.scroll-v svg,
.scroll-h svg {
  margin: auto;
  fill: none;
  stroke: #444;
  stroke-width: 1.5;
}

.scroll-v button {
  height: 7px;
}

.scroll-h button {
  width: 7px;
}

.track {
  flex: 1;
  display: flex;
}

.scroll-v .track {
  flex-direction: column;
  padding-top: 170px;
}

.scroll-h .track {
  padding-left: 280px;
}

.thumb {
  background-color: #cdcdcd;
}

.scroll-v .thumb {
  height: 51%;
}

.scroll-h .thumb {
  width: 54%;
}

/* status bar */
.statusbar {
  height: 6px;
  flex: none;
  display: flex;
  padding-left: 2px;
  overflow: hidden;
  border-top: 1px solid #dcdcdc;
}

.statusbar .coords {
  margin-left: auto;
  margin-right: 310px;
}

/* logos */
.logos {
  position: absolute;
  right: 23px;
  bottom: 13px;
  display: flex;
  flex-direction: column;
  align-items: flex-end;
  gap: 13px;
}

.logo {
  position: relative;
  background-color: #fff;
  font-family: Lato, sans-serif;
  font-weight: 500;
  color: #3b3b3b;
}

.logo .name {
  display: block;
}

.vcarve {
  width: 168px;
  height: 64px;
  padding: 8px 8px;
}

.vcarve .name {
  font-size: 39px;
  line-height: 38px;
}

.vcarve .edition {
  position: absolute;
  right: 34px;
  bottom: 5px;
  font-family: "DejaVu Sans", sans-serif;
  font-size: 13px;
  font-weight: bold;
  line-height: 14px;
  color: #222;
}

.vcarve svg {
  position: absolute;
  right: 12px;
  top: 14px;
}

.aspire {
  width: 173px;
  height: 63px;
  padding: 6px 14px;
}

.aspire .name {
  font-size: 45px;
  line-height: 50px;
}

.aspire svg {
  position: absolute;
  right: 14px;
  top: 12px;
}
```
